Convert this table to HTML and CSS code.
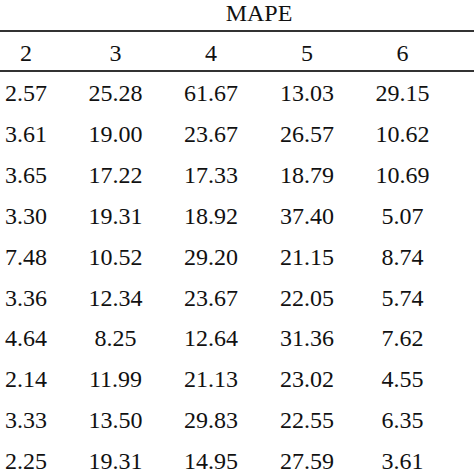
FILE: index.html
```html
<!DOCTYPE html>
<html lang="en">
<head>
<meta charset="utf-8">
<title>MAPE table</title>
<link rel="stylesheet" href="styles.css">
</head>
<body>
<table class="mape">
  <colgroup>
    <col class="c1"><col class="c2"><col class="c3"><col class="c4"><col class="c5"><col class="c6">
  </colgroup>
  <thead>
    <tr class="group-row">
      <th></th>
      <th colspan="4">MAPE</th>
      <th></th>
    </tr>
    <tr class="head-row">
      <th>2</th><th>3</th><th>4</th><th>5</th><th>6</th><th></th>
    </tr>
  </thead>
  <tbody>
    <tr><td>2.57</td><td>25.28</td><td>61.67</td><td>13.03</td><td>29.15</td><td></td></tr>
    <tr><td>3.61</td><td>19.00</td><td>23.67</td><td>26.57</td><td>10.62</td><td></td></tr>
    <tr><td>3.65</td><td>17.22</td><td>17.33</td><td>18.79</td><td>10.69</td><td></td></tr>
    <tr><td>3.30</td><td>19.31</td><td>18.92</td><td>37.40</td><td>5.07</td><td></td></tr>
    <tr><td>7.48</td><td>10.52</td><td>29.20</td><td>21.15</td><td>8.74</td><td></td></tr>
    <tr><td>3.36</td><td>12.34</td><td>23.67</td><td>22.05</td><td>5.74</td><td></td></tr>
    <tr><td>4.64</td><td>8.25</td><td>12.64</td><td>31.36</td><td>7.62</td><td></td></tr>
    <tr><td>2.14</td><td>11.99</td><td>21.13</td><td>23.02</td><td>4.55</td><td></td></tr>
    <tr><td>3.33</td><td>13.50</td><td>29.83</td><td>22.55</td><td>6.35</td><td></td></tr>
    <tr><td>2.25</td><td>19.31</td><td>14.95</td><td>27.59</td><td>3.61</td><td></td></tr>
  </tbody>
</table>
</body>
</html>
```
FILE: styles.css
```css
html, body {
  margin: 0;
  padding: 0;
  background: #ffffff;
  overflow: hidden;
}

.mape {
  border-collapse: separate;
  border-spacing: 0;
  table-layout: fixed;
  width: 474px;
  font-family: "Liberation Serif", "Times New Roman", serif;
  font-size: 24px;
  color: #111111;
}

.mape .c1 { width: 68px; }
.mape .c2 { width: 95px; }
.mape .c3 { width: 96px; }
.mape .c4 { width: 96px; }
.mape .c5 { width: 95px; }
.mape .c6 { width: 24px; }

.mape th,
.mape td {
  text-align: center;
  font-weight: normal;
  padding: 0;
  white-space: nowrap;
}

.mape th:first-child,
.mape td:first-child {
  padding-right: 16px;
}

.group-row th {
  line-height: 26px;
  padding-bottom: 4px;
}

.head-row th {
  border-top: 2px solid #333333;
  border-bottom: 2px solid #333333;
  padding-top: 4px;
  line-height: 34px;
}

.mape td {
  padding-top: 2px;
  line-height: 38.9px;
}
```
